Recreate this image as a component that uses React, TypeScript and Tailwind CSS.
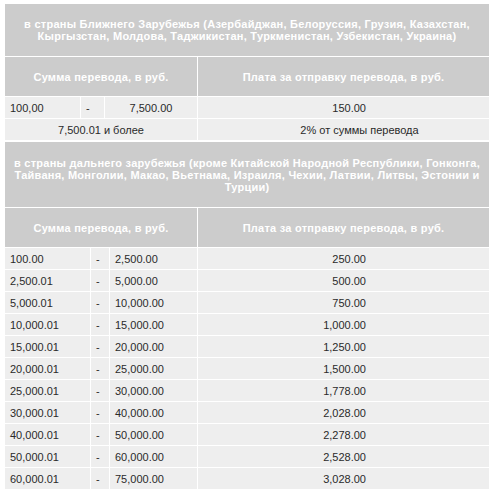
const near = [{ from: "100,00", to: "7,500.00", fee: "150.00" }];

const far = [
  ["100.00", "2,500.00", "250.00"],
  ["2,500.01", "5,000.00", "500.00"],
  ["5,000.01", "10,000.00", "750.00"],
  ["10,000.01", "15,000.00", "1,000.00"],
  ["15,000.01", "20,000.00", "1,250.00"],
  ["20,000.01", "25,000.00", "1,500.00"],
  ["25,000.01", "30,000.00", "1,778.00"],
  ["30,000.01", "40,000.00", "2,028.00"],
  ["40,000.01", "50,000.00", "2,278.00"],
  ["50,000.01", "60,000.00", "2,528.00"],
  ["60,000.01", "75,000.00", "3,028.00"],
];

const head =
  "bg-[#cccccc] text-white font-bold tracking-[0.25px] flex items-center justify-center text-center";
const cell = "bg-[#eeeeee] flex items-center px-[5px]";

function Fee({ value }: { value: string }) {
  return (
    <div className={`${cell} justify-center`}>
      <span className="w-[45px] text-right whitespace-nowrap">{value}</span>
    </div>
  );
}

function ColumnHeads() {
  return (
    <div className="grid h-[39px] grid-cols-[192px_291px] gap-px">
      <div className={head}>Сумма перевода, в руб.</div>
      <div className={head}>Плата за отправку перевода, в руб.</div>
    </div>
  );
}

export default function App() {
  return (
    <div
      className="w-[489px] h-[489px] overflow-hidden bg-white pl-[5px] pt-[4px] text-[11px] leading-[12px] text-[#2a2a2a]"
      style={{ fontFamily: '"Liberation Sans", Arial, sans-serif' }}
    >
      <div className="flex w-[484px] flex-col gap-[2px]">
        {/* ближнее зарубежье */}
        <div className="flex flex-col gap-px">
          <div className={`${head} h-[52px]`}>
            в страны Ближнего Зарубежья (Азербайджан, Белоруссия, Грузия, Казахстан,
            <br />
            Кыргызстан, Молдова, Таджикистан, Туркменистан, Узбекистан, Украина)
          </div>
          <ColumnHeads />
          {near.map((r) => (
            <div key={r.from} className="grid h-[21px] grid-cols-[75px_23px_92px_291px] gap-px">
              <div className={cell}>{r.from}</div>
              <div className={cell}>-</div>
              <div className={`${cell} justify-center`}>{r.to}</div>
              <Fee value={r.fee} />
            </div>
          ))}
          <div className="grid h-[21px] grid-cols-[192px_291px] gap-px">
            <div className={`${cell} justify-center`}>7,500.01 и более</div>
            <div className={`${cell} justify-center pl-[37px]`}>2% от суммы перевода</div>
          </div>
        </div>

        {/* дальнее зарубежье */}
        <div className="flex flex-col gap-px">
          <div className={`${head} h-[65px]`}>
            в страны дальнего зарубежья (кроме Китайской Народной Республики, Гонконга,
            <br />
            Тайваня, Монголии, Макао, Вьетнама, Израиля, Чехии, Латвии, Литвы, Эстонии и
            <br />
            Турции)
          </div>
          <ColumnHeads />
          {far.map(([from, to, fee]) => (
            <div key={from} className="grid h-[21px] shrink-0 grid-cols-[85px_18px_87px_291px] gap-px">
              <div className={cell}>{from}</div>
              <div className={cell}>-</div>
              <div className={cell}>{to}</div>
              <Fee value={fee} />
            </div>
          ))}
        </div>
      </div>
    </div>
  );
}
